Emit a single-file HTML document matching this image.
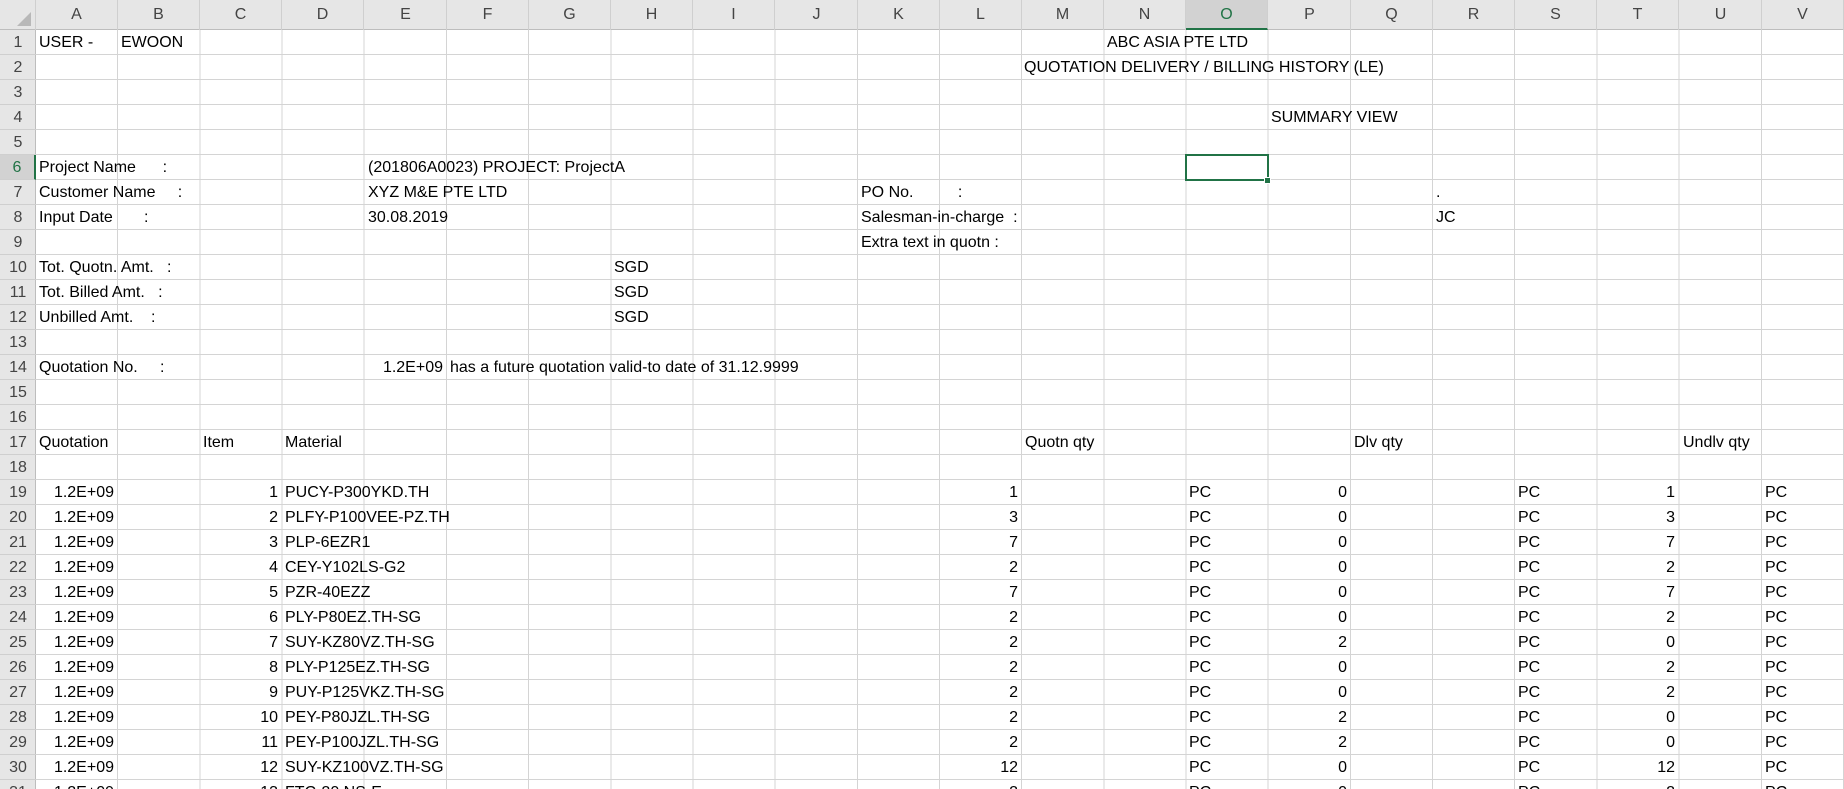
<!DOCTYPE html>
<html><head><meta charset="utf-8"><style>
*{margin:0;padding:0;box-sizing:border-box}
html,body{width:1844px;height:789px;overflow:hidden;background:#fff}
body{font-family:"Liberation Sans",sans-serif;font-size:16px;color:#000}
#wrap{position:relative;width:1844px;height:789px;overflow:hidden}
#grid{position:absolute;left:36px;top:30px;width:1808px;height:759px;
background-image:repeating-linear-gradient(to right,transparent 0,transparent 81.18px,#d4d4d4 81.18px,#d4d4d4 82.18px),repeating-linear-gradient(to bottom,transparent 0,transparent 24px,#d4d4d4 24px,#d4d4d4 25px)}
#ch{position:absolute;left:0;top:0;width:1844px;height:30px;background:#e6e6e6;border-bottom:1px solid #bdbdbd}
#rh{position:absolute;left:0;top:30px;width:36px;height:759px;background:#e6e6e6;border-right:1px solid #bdbdbd}
.c{position:absolute;top:0;height:30px;width:82px;text-align:center;line-height:30px;color:#444;border-right:1px solid #cfcfcf}
.rn{position:absolute;left:0;width:36px;height:25px;line-height:25px;text-align:center;color:#444;border-bottom:1px solid #cfcfcf}
.t{position:absolute;white-space:nowrap;height:25px;line-height:26px;padding-left:3px}
.n{position:absolute;white-space:nowrap;height:25px;line-height:26px;width:82px;text-align:right;padding-right:4px}
</style></head><body><div id="wrap">
<div id="grid"></div>
<div id="ch">
<div style="position:absolute;left:0;top:0;width:36px;height:30px;border-right:1px solid #cfcfcf"></div>
<div style="position:absolute;left:17px;top:12px;width:0;height:0;border-left:14px solid transparent;border-bottom:14px solid #b8b8b8"></div>
<div class="c" style="left:36px">A</div><div class="c" style="left:118px">B</div><div class="c" style="left:200px">C</div><div class="c" style="left:282px">D</div><div class="c" style="left:365px">E</div><div class="c" style="left:447px">F</div><div class="c" style="left:529px">G</div><div class="c" style="left:611px">H</div><div class="c" style="left:693px">I</div><div class="c" style="left:776px">J</div><div class="c" style="left:858px">K</div><div class="c" style="left:940px">L</div><div class="c" style="left:1022px">M</div><div class="c" style="left:1104px">N</div><div class="c" style="left:1186px;background:#d2d2d2;color:#217346;border-bottom:2px solid #217346">O</div><div class="c" style="left:1269px">P</div><div class="c" style="left:1351px">Q</div><div class="c" style="left:1433px">R</div><div class="c" style="left:1515px">S</div><div class="c" style="left:1597px">T</div><div class="c" style="left:1680px">U</div><div class="c" style="left:1762px">V</div>
</div>
<div id="rh">
<div class="rn" style="top:0">1</div><div class="rn" style="top:25px">2</div><div class="rn" style="top:50px">3</div><div class="rn" style="top:75px">4</div><div class="rn" style="top:100px">5</div><div class="rn" style="top:125px;background:#d2d2d2;color:#217346;border-right:2px solid #217346">6</div><div class="rn" style="top:150px">7</div><div class="rn" style="top:175px">8</div><div class="rn" style="top:200px">9</div><div class="rn" style="top:225px">10</div><div class="rn" style="top:250px">11</div><div class="rn" style="top:275px">12</div><div class="rn" style="top:300px">13</div><div class="rn" style="top:325px">14</div><div class="rn" style="top:350px">15</div><div class="rn" style="top:375px">16</div><div class="rn" style="top:400px">17</div><div class="rn" style="top:425px">18</div><div class="rn" style="top:450px">19</div><div class="rn" style="top:475px">20</div><div class="rn" style="top:500px">21</div><div class="rn" style="top:525px">22</div><div class="rn" style="top:550px">23</div><div class="rn" style="top:575px">24</div><div class="rn" style="top:600px">25</div><div class="rn" style="top:625px">26</div><div class="rn" style="top:650px">27</div><div class="rn" style="top:675px">28</div><div class="rn" style="top:700px">29</div><div class="rn" style="top:725px">30</div><div class="rn" style="top:750px">31</div>
</div>
<div style="position:absolute;left:1185px;top:154px;width:84px;height:27px;border:2px solid #217346"></div>
<div style="position:absolute;left:1264px;top:177px;width:7px;height:7px;background:#217346;border:1px solid #fff"></div>

<div class="t" style="left:36px;top:30px">USER -</div>
<div class="t" style="left:118px;top:30px">EWOON</div>
<div class="t" style="left:1104px;top:30px">ABC ASIA PTE LTD</div>
<div class="t" style="left:1021px;top:55px">QUOTATION DELIVERY / BILLING HISTORY (LE)</div>
<div class="t" style="left:1268px;top:105px">SUMMARY VIEW</div>

<div class="t" style="left:36px;top:155px">Project Name&nbsp;&nbsp;&nbsp;&nbsp;&nbsp;&nbsp;:</div>
<div class="t" style="left:365px;top:155px">(201806A0023) PROJECT: ProjectA</div>
<div class="t" style="left:36px;top:180px">Customer Name&nbsp;&nbsp;&nbsp;&nbsp;&nbsp;:</div>
<div class="t" style="left:365px;top:180px">XYZ M&amp;E PTE LTD</div>
<div class="t" style="left:858px;top:180px">PO No.&nbsp;&nbsp;&nbsp;&nbsp;&nbsp;&nbsp;&nbsp;&nbsp;&nbsp;&nbsp;:</div>
<div class="t" style="left:1433px;top:180px">.</div>
<div class="t" style="left:36px;top:205px">Input Date&nbsp;&nbsp;&nbsp;&nbsp;&nbsp;&nbsp;&nbsp;:</div>
<div class="t" style="left:365px;top:205px">30.08.2019</div>
<div class="t" style="left:858px;top:205px">Salesman-in-charge&nbsp;&nbsp;:</div>
<div class="t" style="left:1433px;top:205px">JC</div>
<div class="t" style="left:858px;top:230px">Extra text in quotn :</div>
<div class="t" style="left:36px;top:255px">Tot. Quotn. Amt.&nbsp;&nbsp;&nbsp;:</div>
<div class="t" style="left:611px;top:255px">SGD</div>
<div class="t" style="left:36px;top:280px">Tot. Billed Amt.&nbsp;&nbsp;&nbsp;:</div>
<div class="t" style="left:611px;top:280px">SGD</div>
<div class="t" style="left:36px;top:305px">Unbilled Amt.&nbsp;&nbsp;&nbsp;&nbsp;:</div>
<div class="t" style="left:611px;top:305px">SGD</div>
<div class="t" style="left:36px;top:355px">Quotation No.&nbsp;&nbsp;&nbsp;&nbsp;&nbsp;:</div>
<div class="n" style="left:365px;top:355px">1.2E+09</div>
<div class="t" style="left:447px;top:355px">has a future quotation valid-to date of 31.12.9999</div>

<div class="t" style="left:36px;top:430px">Quotation</div>
<div class="t" style="left:200px;top:430px">Item</div>
<div class="t" style="left:282px;top:430px">Material</div>
<div class="t" style="left:1022px;top:430px">Quotn qty</div>
<div class="t" style="left:1351px;top:430px">Dlv qty</div>
<div class="t" style="left:1680px;top:430px">Undlv qty</div>

<div class="n" style="left:36px;top:480px">1.2E+09</div><div class="n" style="left:200px;top:480px">1</div><div class="t" style="left:282px;top:480px">PUCY-P300YKD.TH</div><div class="n" style="left:940px;top:480px">1</div><div class="t" style="left:1186px;top:480px">PC</div><div class="n" style="left:1269px;top:480px">0</div><div class="t" style="left:1515px;top:480px">PC</div><div class="n" style="left:1597px;top:480px">1</div><div class="t" style="left:1762px;top:480px">PC</div>
<div class="n" style="left:36px;top:505px">1.2E+09</div><div class="n" style="left:200px;top:505px">2</div><div class="t" style="left:282px;top:505px">PLFY-P100VEE-PZ.TH</div><div class="n" style="left:940px;top:505px">3</div><div class="t" style="left:1186px;top:505px">PC</div><div class="n" style="left:1269px;top:505px">0</div><div class="t" style="left:1515px;top:505px">PC</div><div class="n" style="left:1597px;top:505px">3</div><div class="t" style="left:1762px;top:505px">PC</div>
<div class="n" style="left:36px;top:530px">1.2E+09</div><div class="n" style="left:200px;top:530px">3</div><div class="t" style="left:282px;top:530px">PLP-6EZR1</div><div class="n" style="left:940px;top:530px">7</div><div class="t" style="left:1186px;top:530px">PC</div><div class="n" style="left:1269px;top:530px">0</div><div class="t" style="left:1515px;top:530px">PC</div><div class="n" style="left:1597px;top:530px">7</div><div class="t" style="left:1762px;top:530px">PC</div>
<div class="n" style="left:36px;top:555px">1.2E+09</div><div class="n" style="left:200px;top:555px">4</div><div class="t" style="left:282px;top:555px">CEY-Y102LS-G2</div><div class="n" style="left:940px;top:555px">2</div><div class="t" style="left:1186px;top:555px">PC</div><div class="n" style="left:1269px;top:555px">0</div><div class="t" style="left:1515px;top:555px">PC</div><div class="n" style="left:1597px;top:555px">2</div><div class="t" style="left:1762px;top:555px">PC</div>
<div class="n" style="left:36px;top:580px">1.2E+09</div><div class="n" style="left:200px;top:580px">5</div><div class="t" style="left:282px;top:580px">PZR-40EZZ</div><div class="n" style="left:940px;top:580px">7</div><div class="t" style="left:1186px;top:580px">PC</div><div class="n" style="left:1269px;top:580px">0</div><div class="t" style="left:1515px;top:580px">PC</div><div class="n" style="left:1597px;top:580px">7</div><div class="t" style="left:1762px;top:580px">PC</div>
<div class="n" style="left:36px;top:605px">1.2E+09</div><div class="n" style="left:200px;top:605px">6</div><div class="t" style="left:282px;top:605px">PLY-P80EZ.TH-SG</div><div class="n" style="left:940px;top:605px">2</div><div class="t" style="left:1186px;top:605px">PC</div><div class="n" style="left:1269px;top:605px">0</div><div class="t" style="left:1515px;top:605px">PC</div><div class="n" style="left:1597px;top:605px">2</div><div class="t" style="left:1762px;top:605px">PC</div>
<div class="n" style="left:36px;top:630px">1.2E+09</div><div class="n" style="left:200px;top:630px">7</div><div class="t" style="left:282px;top:630px">SUY-KZ80VZ.TH-SG</div><div class="n" style="left:940px;top:630px">2</div><div class="t" style="left:1186px;top:630px">PC</div><div class="n" style="left:1269px;top:630px">2</div><div class="t" style="left:1515px;top:630px">PC</div><div class="n" style="left:1597px;top:630px">0</div><div class="t" style="left:1762px;top:630px">PC</div>
<div class="n" style="left:36px;top:655px">1.2E+09</div><div class="n" style="left:200px;top:655px">8</div><div class="t" style="left:282px;top:655px">PLY-P125EZ.TH-SG</div><div class="n" style="left:940px;top:655px">2</div><div class="t" style="left:1186px;top:655px">PC</div><div class="n" style="left:1269px;top:655px">0</div><div class="t" style="left:1515px;top:655px">PC</div><div class="n" style="left:1597px;top:655px">2</div><div class="t" style="left:1762px;top:655px">PC</div>
<div class="n" style="left:36px;top:680px">1.2E+09</div><div class="n" style="left:200px;top:680px">9</div><div class="t" style="left:282px;top:680px">PUY-P125VKZ.TH-SG</div><div class="n" style="left:940px;top:680px">2</div><div class="t" style="left:1186px;top:680px">PC</div><div class="n" style="left:1269px;top:680px">0</div><div class="t" style="left:1515px;top:680px">PC</div><div class="n" style="left:1597px;top:680px">2</div><div class="t" style="left:1762px;top:680px">PC</div>
<div class="n" style="left:36px;top:705px">1.2E+09</div><div class="n" style="left:200px;top:705px">10</div><div class="t" style="left:282px;top:705px">PEY-P80JZL.TH-SG</div><div class="n" style="left:940px;top:705px">2</div><div class="t" style="left:1186px;top:705px">PC</div><div class="n" style="left:1269px;top:705px">2</div><div class="t" style="left:1515px;top:705px">PC</div><div class="n" style="left:1597px;top:705px">0</div><div class="t" style="left:1762px;top:705px">PC</div>
<div class="n" style="left:36px;top:730px">1.2E+09</div><div class="n" style="left:200px;top:730px">11</div><div class="t" style="left:282px;top:730px">PEY-P100JZL.TH-SG</div><div class="n" style="left:940px;top:730px">2</div><div class="t" style="left:1186px;top:730px">PC</div><div class="n" style="left:1269px;top:730px">2</div><div class="t" style="left:1515px;top:730px">PC</div><div class="n" style="left:1597px;top:730px">0</div><div class="t" style="left:1762px;top:730px">PC</div>
<div class="n" style="left:36px;top:755px">1.2E+09</div><div class="n" style="left:200px;top:755px">12</div><div class="t" style="left:282px;top:755px">SUY-KZ100VZ.TH-SG</div><div class="n" style="left:940px;top:755px">12</div><div class="t" style="left:1186px;top:755px">PC</div><div class="n" style="left:1269px;top:755px">0</div><div class="t" style="left:1515px;top:755px">PC</div><div class="n" style="left:1597px;top:755px">12</div><div class="t" style="left:1762px;top:755px">PC</div>
<div class="n" style="left:36px;top:780px">1.2E+09</div><div class="n" style="left:200px;top:780px">13</div><div class="t" style="left:282px;top:780px">FTC-20 NS-E</div><div class="n" style="left:940px;top:780px">2</div><div class="t" style="left:1186px;top:780px">PC</div><div class="n" style="left:1269px;top:780px">0</div><div class="t" style="left:1515px;top:780px">PC</div><div class="n" style="left:1597px;top:780px">2</div><div class="t" style="left:1762px;top:780px">PC</div>
</div></body></html>
